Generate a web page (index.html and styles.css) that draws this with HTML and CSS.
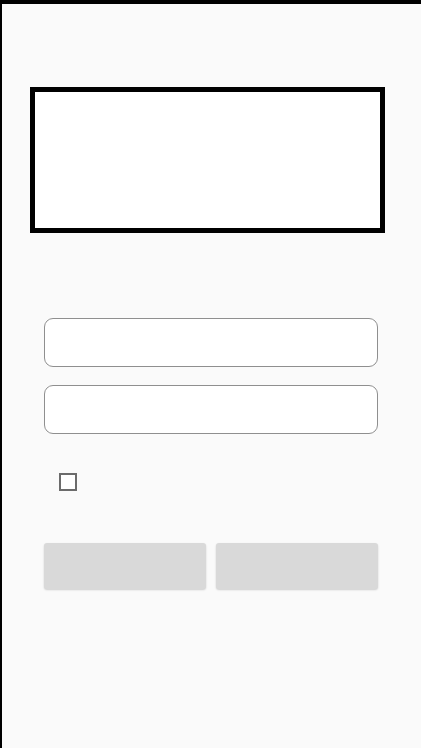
FILE: index.html
```html
<!DOCTYPE html>
<html>
<head>
<meta charset="utf-8">
<link rel="stylesheet" href="styles.css">
</head>
<body>
<div class="frame">
  <div class="banner"></div>
  <form class="form">
    <input class="field" type="text">
    <input class="field" type="password">
    <div class="check-row"><span class="checkbox"></span></div>
    <div class="buttons">
      <button type="button" class="btn"></button>
      <button type="button" class="btn"></button>
    </div>
  </form>
</div>
</body>
</html>
```
FILE: styles.css
```css
html, body {
  margin: 0;
  padding: 0;
  background: #fafafa;
  font-family: Roboto, "Liberation Sans", sans-serif;
}
.frame {
  box-sizing: border-box;
  width: 421px;
  height: 748px;
  border-top: 4px solid #000;
  border-left: 2px solid #000;
  background: #fafafa;
  padding-top: 83px;
}
.banner {
  box-sizing: border-box;
  margin-left: 28px;
  width: 355px;
  height: 146px;
  border: 5px solid #000;
  background: #fff;
}
.form {
  margin: 85px 0 0 42px;
  width: 334px;
  display: flex;
  flex-direction: column;
}
.field {
  box-sizing: border-box;
  width: 334px;
  height: 49px;
  margin: 0 0 18px 0;
  border: 1px solid #8f8f8f;
  border-radius: 9px;
  background: #fff;
  outline: none;
}
.check-row {
  display: flex;
  align-items: center;
  padding: 20px 0 0 15px;
  height: 20px;
}
.checkbox {
  box-sizing: border-box;
  width: 18px;
  height: 18px;
  border: 2px solid #6b6b6b;
  background: #fff;
}
.buttons {
  display: flex;
  gap: 10px;
  margin-top: 51px;
}
.btn {
  width: 162px;
  height: 46px;
  border: none;
  border-radius: 3px;
  background: #d9d9d9;
  box-shadow: 0 1px 2px rgba(0,0,0,0.18);
  padding: 0;
}
```
